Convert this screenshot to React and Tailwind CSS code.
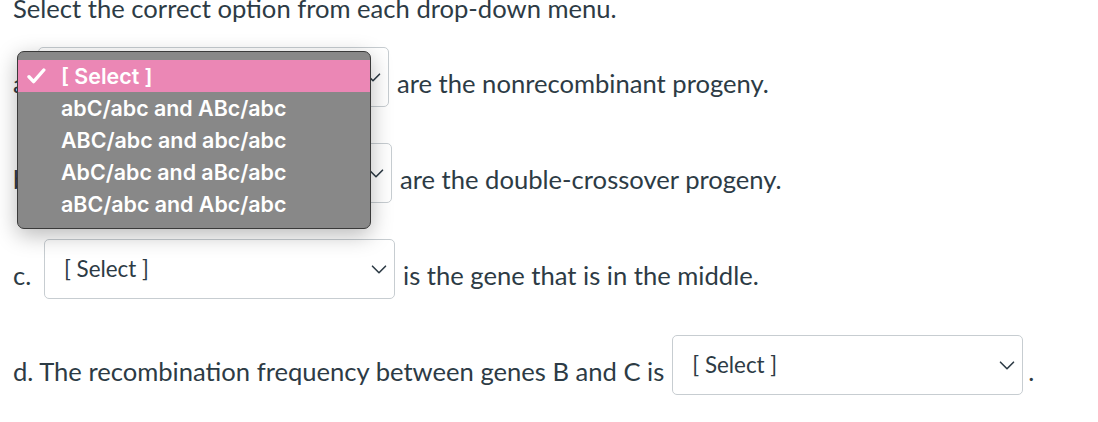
import React from "react";

const Chevron = () => (
  <svg width="16" height="9" viewBox="0 0 16 9" fill="none" stroke="#2d3b45" strokeWidth="1.6" strokeLinecap="round" strokeLinejoin="round">
    <path d="M1.5 1.2l6.5 6.5 6.5-6.5" />
  </svg>
);

function SelectBox() {
  return (
    <div className="w-[351px] h-[60px] shrink-0 rounded-[5px] border border-[#c7cdd1] bg-white flex items-center justify-between pl-[19px] pr-[7px]">
      <span className="text-[22.4px] leading-none text-[#2d3b45]">[ Select ]</span>
      <Chevron />
    </div>
  );
}

const options = [
  "abC/abc and ABc/abc",
  "ABC/abc and abc/abc",
  "AbC/abc and aBc/abc",
  "aBC/abc and Abc/abc",
];

export default function App() {
  return (
    <div className="relative bg-white w-[1098px] h-[422px] overflow-hidden px-[13px] text-[#2d3b45] text-[25.6px]" style={{ fontFamily: "Lato, 'Open Sans', sans-serif" }}>
      <div className="-mt-[7px] leading-[30px]">Select the correct option from each drop-down menu.</div>

      <div className="mt-[24px] flex flex-col gap-[36px]">
        <div className="flex items-center">
          <span className="w-[25px] pt-[12px]">a.</span>
          <SelectBox />
          <span className="ml-[8px] pt-[12px]">are the nonrecombinant progeny.</span>
        </div>
        <div className="flex items-center">
          <span className="w-[28px] pt-[12px]">b.</span>
          <SelectBox />
          <span className="ml-[8px] pt-[12px]">are the double-crossover progeny.</span>
        </div>
        <div className="flex items-center">
          <span className="w-[31px] pt-[12px]">c.</span>
          <SelectBox />
          <span className="ml-[8px] pt-[12px]">is the gene that is in the middle.</span>
        </div>
        <div className="flex items-center">
          <span className="pt-[12px] mr-[8px]">d. The recombination frequency between genes B and C is</span>
          <SelectBox />
          <span className="ml-[5px] pt-[12px]">.</span>
        </div>
      </div>

      <div
        className="absolute left-[17px] top-[51px] w-[354px] h-[178px] rounded-[7px] border border-[#3a3a3a] bg-[#888888] shadow-[0_6px_22px_rgba(0,0,0,0.28)] pt-[8px] text-white text-[21.4px] font-semibold"
        style={{ fontFamily: "Inter, 'Noto Sans', sans-serif" }}
      >
        <div className="h-[32px] bg-[#eb87b5] flex items-center">
          <span className="w-[43px] pl-[9px]">
            <svg width="19" height="16" viewBox="0 0 19 16" fill="none" stroke="white" strokeWidth="3.4" strokeLinecap="round" strokeLinejoin="round" className="block">
              <path d="M2 8.8l4.6 4.8L16.8 2" />
            </svg>
          </span>
          <span>[ Select ]</span>
        </div>
        {options.map((o) => (
          <div key={o} className="h-[32px] flex items-center pl-[43px]">
            {o}
          </div>
        ))}
      </div>
    </div>
  );
}
